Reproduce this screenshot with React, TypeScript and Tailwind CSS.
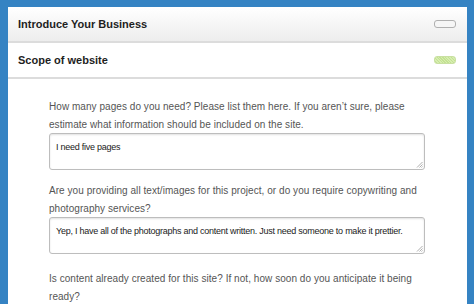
import React from "react";

function Question({ q, value, className = "" }: { q: React.ReactNode; value?: string; className?: string }) {
  return (
    <div className={"flex flex-col " + className}>
      <p className="text-[10px] leading-[18px] text-[#555] tracking-[0.05px]">{q}</p>
      {value !== undefined && (
        <div className="relative mt-[-1px] h-[37px] w-[376px] rounded-[3px] border border-[#bdbdbd] bg-white shadow-[inset_0_1px_2px_rgba(0,0,0,0.12)] px-[6px] pt-[7px]">
          <div className="text-[9px] leading-[12px] text-[#222] tracking-[-0.25px]">{value}</div>
          <svg className="absolute right-[1px] bottom-[1px]" width="7" height="7" viewBox="0 0 7 7">
            <path d="M6.5 1 L1 6.5 M6.5 3.5 L3.5 6.5 M6.5 5.5 L5.5 6.5" stroke="#999" strokeWidth="0.8" />
          </svg>
        </div>
      )}
    </div>
  );
}

export default function App() {
  return (
    <div className="w-[474px] h-[304px] overflow-hidden bg-[#3583c3] pt-[7px] pl-[8px] font-['Liberation_Sans',Arial,sans-serif]">
      <div className="w-[459px] h-[297px] bg-white flex flex-col">
        <div className="h-[36px] shrink-0 flex items-center justify-between pl-[10px] pr-[11px] bg-gradient-to-b from-white to-[#ededed] border-b-2 border-[#dcdcdc]">
          <span className="text-[11px] font-bold text-[#1e1e1e]">Introduce Your Business</span>
          <span className="w-[22px] h-[8px] rounded-[3px] border border-[#b0b0b0] bg-[#f6f6f6]" />
        </div>
        <div className="h-[36px] shrink-0 flex items-center justify-between pl-[10px] pr-[11px] bg-white border-b-2 border-[#dcdcdc]">
          <span className="text-[11px] font-bold text-[#1e1e1e]">Scope of website</span>
          <span className="w-[22px] h-[8px] rounded-[3px] border border-[#c9e0a2] bg-[repeating-linear-gradient(45deg,#d6edb0_0px,#d6edb0_1px,#c3e192_1px,#c3e192_2px)]" />
        </div>
        <div className="flex flex-col pl-[41px] pt-[19px]">
          <Question
            q={<>How many pages do you need? Please list them here. If you aren’t sure, please<br />estimate what information should be included on the site.</>}
            value="I need five pages"
          />
          <Question
            className="mt-[12px]"
            q={<>Are you providing all text/images for this project, or do you require copywriting and<br />photography services?</>}
            value="Yep, I have all of the photographs and content written. Just need someone to make it prettier."
          />
          <Question
            className="mt-[16px]"
            q={<>Is content already created for this site? If not, how soon do you anticipate it being<br />ready?</>}
          />
        </div>
      </div>
    </div>
  );
}
